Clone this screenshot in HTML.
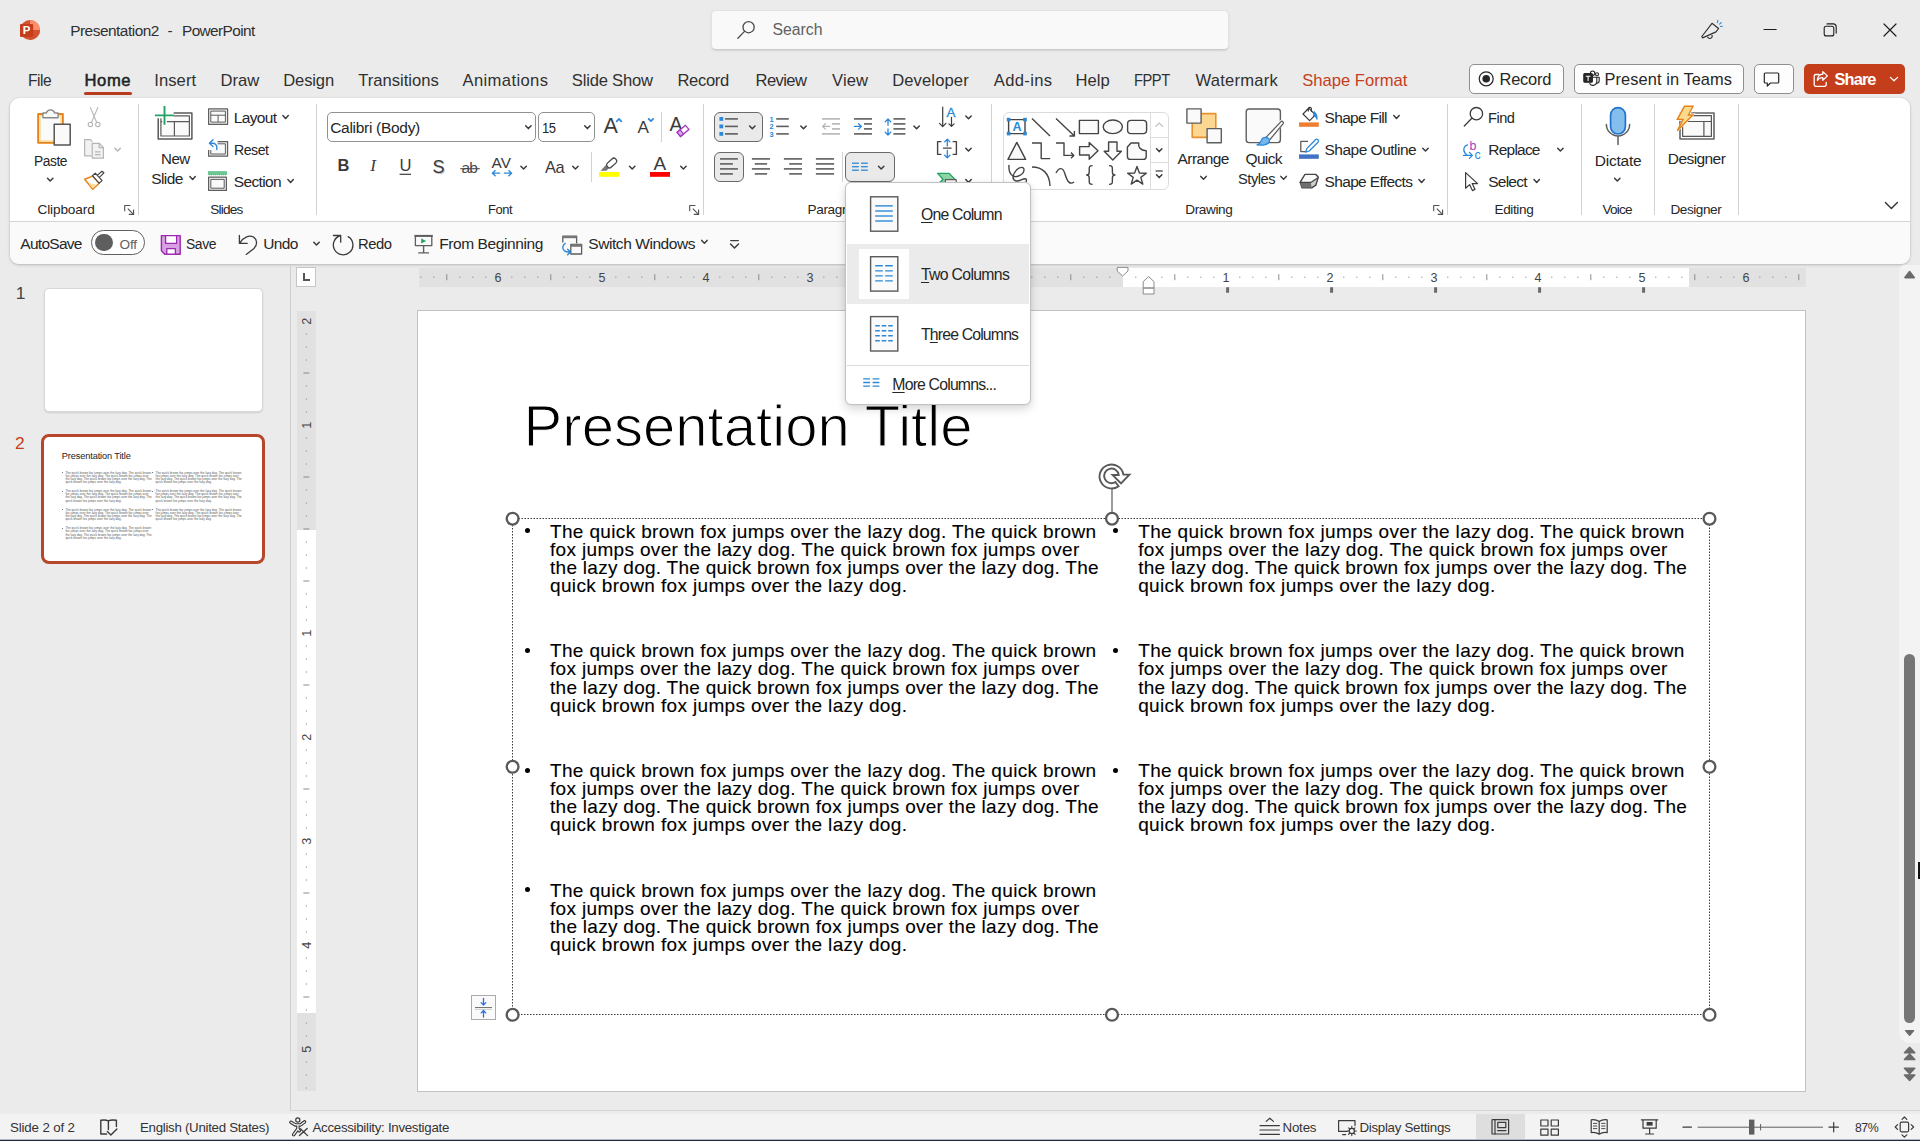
<!DOCTYPE html>
<html lang="en">
<head>
<meta charset="utf-8">
<title>Presentation2 - PowerPoint</title>
<style>
html,body{margin:0;padding:0}
body{width:1920px;height:1141px;position:relative;overflow:hidden;background:#ebebeb;font-family:"Liberation Sans",sans-serif;color:#262626}
.a{position:absolute;box-sizing:border-box}
.t{position:absolute;white-space:pre;line-height:1}
.t u{text-decoration:underline;text-underline-offset:1.5px;text-decoration-thickness:1px}
svg.l{position:absolute;left:0;top:0;overflow:visible}
.btn{position:absolute;box-sizing:border-box;border:1px solid #8f8f8f;border-radius:5px;background:#fdfdfd}
.sel{position:absolute;box-sizing:border-box;border:1px solid #6a6a6a;border-radius:6px;background:#eaeaea}
.sep{position:absolute;width:1px;background:#d2d2d2}
</style>
</head>
<body>
<!-- titlebar -->
<svg class="l" width="1920" height="100" viewBox="0 0 1920 100">
<circle cx="30" cy="30" r="10" fill="#d35230"/>
<path d="M30 20a10 10 0 0 1 10 10h-10z" fill="#ff8f6b"/>
<path d="M40 30a10 10 0 0 1-10 10V30z" fill="#d35230"/>
<path d="M30 20v10h10a10 10 0 0 1-10 10a10 10 0 0 1-9.2-6h9.7v-13.6z" fill="none"/>
<rect x="20" y="24" width="13.200" height="13" rx="1" fill="#c43e1c"/>
</svg>
<span class="t" style="left:22.80px;top:25.00px;font-size:11.4px;color:#fff;font-weight:700;">P</span>
<span class="t" style="left:70.20px;top:23.00px;font-size:15.4px;color:#303030;letter-spacing:-0.482px;">Presentation2</span>
<span class="t" style="left:167.60px;top:23.00px;font-size:15.4px;color:#303030;">-</span>
<span class="t" style="left:182.00px;top:23.00px;font-size:15.4px;color:#303030;letter-spacing:-0.613px;">PowerPoint</span>
<div class="a" style="left:711px;top:10px;width:518px;height:40px;background:#f9f9f9;border:1px solid #e2e2e2;border-bottom-color:#c9c9c9;border-radius:5px;box-shadow:0 1px 2px rgba(0,0,0,.10)"></div>
<svg class="l" width="1920" height="100" viewBox="0 0 1920 100" fill="none" stroke="#4a4a4a" stroke-width="1.3" stroke-linecap="round">
<circle cx="748.6" cy="27.2" r="5.6"/><path d="M744.5 31.4L737.9 38.2"/>
<!-- window controls -->
<path d="M1764 29.5h12.2" stroke="#1f1f1f" stroke-width="1.1"/>
<rect x="1824.2" y="26.3" width="9.6" height="9.6" rx="2" stroke="#1f1f1f" stroke-width="1.1"/>
<path d="M1827 23.9h6.2a3 3 0 0 1 3 3v6.2" stroke="#1f1f1f" stroke-width="1.1"/>
<path d="M1884 24l12 12M1896 24l-12 12" stroke="#1f1f1f" stroke-width="1.2"/>
<!-- coming soon megaphone -->
<path d="M1701.8 36.5l10.2-13.2l6.6 5.2l-2.6 3.4l-13.4 6z" stroke="#333" stroke-width="1.2" stroke-linejoin="round"/>
<path d="M1707.6 37.1a2.4 2.4 0 0 0 4.4-1.9" stroke="#333" stroke-width="1.1"/>
<path d="M1717.3 22.6l.6-2.2M1719.4 24.1l1.8-1.4M1720.3 26.5l2.1-.2" stroke="#2b88d8" stroke-width="1.1"/>
</svg>
<span class="t" style="left:772.40px;top:22.00px;font-size:15.8px;color:#616161;letter-spacing:0.028px;">Search</span>
<!-- tabs -->
<span class="t" style="left:27.50px;top:73.00px;font-size:16.6px;color:#303030;letter-spacing:-0.500px;transform:scaleX(0.9386);transform-origin:0 0;">File</span>
<span class="t" style="left:84.50px;top:73.00px;font-size:16.6px;color:#1f1f1f;letter-spacing:0.611px;-webkit-text-stroke:0.55px #1f1f1f;">Home</span>
<span class="t" style="left:154.20px;top:73.00px;font-size:16.6px;color:#303030;letter-spacing:0.097px;">Insert</span>
<span class="t" style="left:220.50px;top:73.00px;font-size:16.6px;color:#303030;letter-spacing:-0.011px;">Draw</span>
<span class="t" style="left:283.20px;top:73.00px;font-size:16.6px;color:#303030;letter-spacing:-0.131px;">Design</span>
<span class="t" style="left:358.20px;top:73.00px;font-size:16.6px;color:#303030;letter-spacing:0.005px;">Transitions</span>
<span class="t" style="left:462.50px;top:73.00px;font-size:16.6px;color:#303030;letter-spacing:0.378px;">Animations</span>
<span class="t" style="left:571.80px;top:73.00px;font-size:16.6px;color:#303030;letter-spacing:-0.203px;">Slide Show</span>
<span class="t" style="left:677.50px;top:73.00px;font-size:16.6px;color:#303030;letter-spacing:-0.360px;">Record</span>
<span class="t" style="left:755.50px;top:73.00px;font-size:16.6px;color:#303030;letter-spacing:-0.584px;">Review</span>
<span class="t" style="left:832.00px;top:73.00px;font-size:16.6px;color:#303030;letter-spacing:0.109px;">View</span>
<span class="t" style="left:892.20px;top:73.00px;font-size:16.6px;color:#303030;letter-spacing:0.107px;">Developer</span>
<span class="t" style="left:993.80px;top:73.00px;font-size:16.6px;color:#303030;letter-spacing:0.322px;">Add-ins</span>
<span class="t" style="left:1075.40px;top:73.00px;font-size:16.6px;color:#303030;letter-spacing:0.086px;">Help</span>
<span class="t" style="left:1134.30px;top:73.00px;font-size:16.6px;color:#303030;letter-spacing:-0.500px;transform:scaleX(0.8846);transform-origin:0 0;">FPPT</span>
<span class="t" style="left:1195.60px;top:73.00px;font-size:16.6px;color:#303030;letter-spacing:0.211px;">Watermark</span>
<span class="t" style="left:1302.30px;top:73.00px;font-size:16.6px;color:#c43e1c;letter-spacing:-0.014px;">Shape Format</span>
<div class="a" style="left:84px;top:92px;width:48px;height:3px;background:#b83b1d;border-radius:1.5px"></div>
<div class="btn" style="left:1469px;top:64px;width:95px;height:30px"></div>
<div class="btn" style="left:1574px;top:64px;width:170px;height:30px"></div>
<div class="btn" style="left:1754px;top:64px;width:40px;height:30px"></div>
<div class="a" style="left:1804px;top:64px;width:101px;height:30px;border-radius:5px;background:#c43e1c"></div>
<span class="t" style="left:1499.50px;top:71.00px;font-size:16.4px;letter-spacing:-0.209px;">Record</span>
<span class="t" style="left:1604.50px;top:71.00px;font-size:16.4px;letter-spacing:0.077px;">Present in Teams</span>
<span class="t" style="left:1834.50px;top:71.00px;font-size:16.4px;color:#ffffff;font-weight:700;letter-spacing:-0.891px;">Share</span>
<svg class="l" width="1920" height="100" viewBox="0 0 1920 100" fill="none" stroke-linecap="round" stroke-linejoin="round">
<circle cx="1486.2" cy="78.8" r="7" stroke="#262626" stroke-width="1.2"/><circle cx="1486.2" cy="78.8" r="3.8" fill="#262626"/>
<!-- teams -->
<g stroke="#262626" stroke-width="1.1">
<rect x="1583.8" y="73.6" width="8.6" height="8.6" rx="1" fill="#262626"/>
<circle cx="1592.6" cy="73.2" r="2.2"/><circle cx="1597" cy="74.2" r="1.5"/>
<path d="M1592.8 77.2h4v4.4a3.8 3.8 0 0 1-7 2"/>
<path d="M1597 77.2h2.2v3.6a2.4 2.4 0 0 1-2.2 2.4"/>
</g>
<path d="M1586.2 76.2h3.8M1588.1 76.2v4.2" stroke="#fff" stroke-width="1.1"/>
<!-- comment -->
<path d="M1765.2 73h12.6a.9.9 0 0 1 .9.9v8.2a.9.9 0 0 1-.9.9h-7.3l-3.2 3v-3h-2.1a.9.9 0 0 1-.9-.9v-8.2a.9.9 0 0 1 .9-.9z" stroke="#262626" stroke-width="1.2"/>
<!-- share icon -->
<path d="M1819 74.5h-3.2a1.6 1.6 0 0 0-1.6 1.6v8.6a1.6 1.6 0 0 0 1.6 1.6h8.8a1.6 1.6 0 0 0 1.6-1.6v-2.2" stroke="#fff" stroke-width="1.3"/>
<path d="M1822.8 71.6l4.6 4.3l-4.6 4.3v-2.6c-2.6 0-4.2.8-5.4 2.8c.2-3.6 2-6 5.4-6.3z" stroke="#fff" stroke-width="1.3"/>
<path d="M1890.4 77.4l3.6 3.4l3.6-3.4" stroke="#fff" stroke-width="1.3"/>
</svg>
<!-- ribbon_bg -->
<div class="a" style="left:10px;top:98px;width:1900px;height:166px;background:#fff;border-radius:9px;box-shadow:0 1px 3px rgba(0,0,0,.22),0 0 1px rgba(0,0,0,.12)"></div>
<div class="a" style="left:10px;top:221px;width:1900px;height:43px;background:#fafafa;border-top:1px solid #d4d4d4;border-radius:0 0 9px 9px"></div>
<div class="sep" style="left:138px;top:104px;height:111px"></div>
<div class="sep" style="left:316px;top:104px;height:111px"></div>
<div class="sep" style="left:703px;top:104px;height:111px"></div>
<div class="sep" style="left:1447px;top:104px;height:111px"></div>
<div class="sep" style="left:1581px;top:104px;height:111px"></div>
<div class="sep" style="left:1654px;top:104px;height:111px"></div>
<div class="sep" style="left:1738px;top:104px;height:111px"></div>
<div class="sep" style="left:991px;top:104px;height:79px"></div>
<div class="sep" style="left:661px;top:112px;height:30px"></div>
<div class="sep" style="left:591px;top:152px;height:30px"></div>
<div class="sep" style="left:842px;top:152px;height:30px"></div>
<div class="btn" style="left:327px;top:112px;width:209px;height:30px;background:#fff;border-color:#919191"></div>
<div class="btn" style="left:538px;top:112px;width:57px;height:30px;background:#fff;border-color:#919191"></div>
<div class="sel" style="left:714px;top:112px;width:49px;height:30px"></div>
<div class="sel" style="left:714px;top:152px;width:30px;height:30px"></div>
<div class="sel" style="left:845px;top:152px;width:50px;height:30px"></div>
<div class="a" style="left:91.3px;top:230.3px;width:53.6px;height:24.6px;background:#fff;border:1px solid #616161;border-radius:12.3px"></div>
<div class="a" style="left:95.4px;top:233.7px;width:17.6px;height:17.6px;background:#5e5e5e;border-radius:50%"></div>
<div class="a" style="left:1003px;top:112px;width:165.5px;height:78px;border:1px solid #dcdcdc;border-radius:6px;background:#fff"></div>
<div class="a" style="left:1150px;top:112px;width:1px;height:78px;background:#dcdcdc"></div>
<div class="a" style="left:1150px;top:137px;width:18px;height:1px;background:#dcdcdc"></div>
<div class="a" style="left:1150px;top:161.5px;width:18px;height:1px;background:#dcdcdc"></div>
<!-- ribbon_text -->
<span class="t" style="left:34.00px;top:153.00px;font-size:15.5px;letter-spacing:-0.500px;transform:scaleX(0.8900);transform-origin:0 0;">Paste</span>
<span class="t" style="left:37.50px;top:203.00px;font-size:13.6px;letter-spacing:-0.123px;">Clipboard</span>
<span class="t" style="left:160.50px;top:151.00px;font-size:15.5px;letter-spacing:-0.500px;transform:scaleX(0.9728);transform-origin:0 0;">New</span>
<span class="t" style="left:151.30px;top:171.00px;font-size:15.5px;letter-spacing:-0.617px;">Slide</span>
<span class="t" style="left:233.70px;top:110.00px;font-size:15.5px;letter-spacing:-0.649px;">Layout</span>
<span class="t" style="left:233.70px;top:142.00px;font-size:15.5px;letter-spacing:-0.500px;transform:scaleX(0.9091);transform-origin:0 0;">Reset</span>
<span class="t" style="left:233.70px;top:174.00px;font-size:15.5px;letter-spacing:-0.617px;">Section</span>
<span class="t" style="left:210.30px;top:203.00px;font-size:13.6px;letter-spacing:-0.806px;">Slides</span>
<span class="t" style="left:330.20px;top:120.00px;font-size:15.5px;letter-spacing:-0.292px;">Calibri (Body)</span>
<span class="t" style="left:542.20px;top:120.00px;font-size:15.5px;letter-spacing:-0.500px;transform:scaleX(0.8418);transform-origin:0 0;">15</span>
<span class="t" style="left:487.50px;top:203.00px;font-size:13.6px;letter-spacing:-0.500px;transform:scaleX(0.9532);transform-origin:0 0;">Font</span>
<span class="t" style="left:807.50px;top:203.00px;font-size:13.6px;letter-spacing:-0.373px;">Paragraph</span>
<span class="t" style="left:1177.50px;top:151.00px;font-size:15.5px;letter-spacing:-0.526px;">Arrange</span>
<span class="t" style="left:1245.50px;top:151.00px;font-size:15.5px;letter-spacing:-0.656px;">Quick</span>
<span class="t" style="left:1237.50px;top:171.00px;font-size:15.5px;letter-spacing:-0.500px;transform:scaleX(0.9441);transform-origin:0 0;">Styles</span>
<span class="t" style="left:1324.50px;top:110.00px;font-size:15.5px;letter-spacing:-0.660px;">Shape Fill</span>
<span class="t" style="left:1324.50px;top:142.00px;font-size:15.5px;letter-spacing:-0.504px;">Shape Outline</span>
<span class="t" style="left:1324.50px;top:174.00px;font-size:15.5px;letter-spacing:-0.645px;">Shape Effects</span>
<span class="t" style="left:1185.30px;top:203.00px;font-size:13.6px;letter-spacing:-0.396px;">Drawing</span>
<span class="t" style="left:1488.30px;top:110.00px;font-size:15.5px;letter-spacing:-0.500px;transform:scaleX(0.9422);transform-origin:0 0;">Find</span>
<span class="t" style="left:1488.30px;top:142.00px;font-size:15.5px;letter-spacing:-0.779px;">Replace</span>
<span class="t" style="left:1488.30px;top:174.00px;font-size:15.5px;letter-spacing:-0.779px;">Select</span>
<span class="t" style="left:1494.50px;top:203.00px;font-size:13.6px;letter-spacing:-0.396px;">Editing</span>
<span class="t" style="left:1594.70px;top:153.00px;font-size:15.5px;letter-spacing:-0.208px;">Dictate</span>
<span class="t" style="left:1602.50px;top:203.00px;font-size:13.6px;letter-spacing:-0.816px;">Voice</span>
<span class="t" style="left:1667.80px;top:151.00px;font-size:15.5px;letter-spacing:-0.576px;">Designer</span>
<span class="t" style="left:1670.50px;top:203.00px;font-size:13.6px;letter-spacing:-0.458px;">Designer</span>
<span class="t" style="left:20.30px;top:236.00px;font-size:15.5px;letter-spacing:-0.717px;">AutoSave</span>
<span class="t" style="left:186.30px;top:236.00px;font-size:15.5px;letter-spacing:-0.500px;transform:scaleX(0.8982);transform-origin:0 0;">Save</span>
<span class="t" style="left:263.30px;top:236.00px;font-size:15.5px;letter-spacing:-0.688px;">Undo</span>
<span class="t" style="left:358.30px;top:236.00px;font-size:15.5px;letter-spacing:-0.500px;transform:scaleX(0.9533);transform-origin:0 0;">Redo</span>
<span class="t" style="left:439.20px;top:236.00px;font-size:15.5px;letter-spacing:-0.409px;">From Beginning</span>
<span class="t" style="left:588.30px;top:236.00px;font-size:15.5px;letter-spacing:-0.434px;">Switch Windows</span>
<span class="t" style="left:119.50px;top:238.00px;font-size:13.6px;color:#616161;letter-spacing:-0.195px;">Off</span>
<span class="t" style="left:337.50px;top:157.00px;font-size:16.5px;color:#3b3b3b;font-weight:700;">B</span>
<span class="t" style="left:370.20px;top:157.00px;font-size:17px;color:#3b3b3b;font-family:'Liberation Serif',serif;font-style:italic;">I</span>
<span class="t" style="left:399.40px;top:158.00px;font-size:16.6px;color:#3b3b3b;">U</span>
<span class="t" style="left:432.40px;top:158.00px;font-size:18px;color:#3b3b3b;text-shadow:1.2px 1.2px 0.6px #bdbdbd;">S</span>
<span class="t" style="left:461.50px;top:160.00px;font-size:15.5px;color:#4a4a4a;letter-spacing:-0.750px;">ab</span>
<span class="t" style="left:491.60px;top:155.00px;font-size:15.4px;color:#3b3b3b;">AV</span>
<span class="t" style="left:544.90px;top:159.00px;font-size:17px;color:#3b3b3b;letter-spacing:-0.500px;transform:scaleX(0.9657);transform-origin:0 0;">Aa</span>
<span class="t" style="left:603.40px;top:116.00px;font-size:21.5px;color:#3b3b3b;">A</span>
<span class="t" style="left:637.60px;top:119.00px;font-size:17.2px;color:#3b3b3b;">A</span>
<span class="t" style="left:669.60px;top:115.00px;font-size:19.5px;color:#3b3b3b;">A</span>
<span class="t" style="left:653.40px;top:154.00px;font-size:19px;color:#3b3b3b;">A</span>
<!-- ribbon_icons -->
<svg class="l" width="1920" height="300" viewBox="0 0 1920 300" fill="none" stroke-linejoin="round">
<rect x="38.2" y="114" width="24.6" height="28.8" fill="#fafafa" stroke="#e8811a" stroke-width="2"/>
<rect x="40" y="115.8" width="21" height="25.2" fill="none" stroke="#fbdc9a" stroke-width="1.4"/>
<path d="M42.900 117.800v-4.800h3.400a4.400 4.400 0 0 1 8.400 0h3.400v4.800z" fill="#fafafa" stroke="#8a8a8a" stroke-width="1.400"/>
<rect x="54.200" y="124.200" width="16" height="20.800" fill="#fafafa" stroke="#555" stroke-width="1.500"/>
<path d="M47.50 178.20L50.20 181.00L52.90 178.20" fill="none" stroke="#3b3b3b" stroke-width="1.5" stroke-linecap="round" stroke-linejoin="round"/>
<g stroke="#b5b5b5" stroke-width="1.100" stroke-linecap="round"><path d="M90.400 107.600L96.600 122.200M97.800 107.600L91.600 122.200"/><circle cx="90.400" cy="124.400" r="2.200"/><circle cx="97.800" cy="124.400" r="2.200"/></g>
<g stroke="#b5b5b5" stroke-width="1.200"><path d="M91.400 155.800h-6.800v-16.200h5.800l2 2" fill="#f2f2f2"/><path d="M92.200 143.400h7.200l4 4v10.800h-11.200z" fill="#f2f2f2"/><path d="M99.200 143.600v4h4"/><path d="M95 151.800h5.600M95 154.600h5.600"/></g>
<path d="M114.90 148.20L117.60 151.00L120.30 148.20" fill="none" stroke="#b5b5b5" stroke-width="1.5" stroke-linecap="round" stroke-linejoin="round"/>
<path d="M84.700 179.300l7.800-3.200l6.700 7.200l-6.500 6z" fill="#fff" stroke="#e8811a" stroke-width="1.500"/>
<path d="M88.600 183l8 1.800l-4 3.800z" fill="#fbdc9a"/>
<path d="M97.200 175.400l4.800-4.200l1.900 1.600l-4.500 4.500" fill="#fff" stroke="#444" stroke-width="1.200"/>
<path d="M92.400 175.600l2.900-2.400l6.800 7.400l-2.900 2.500z" fill="#fff" stroke="#444" stroke-width="1.200"/>
<g transform="translate(124.2,205)" fill="none" stroke="#505050" stroke-width="1.1"><path d="M0.5 6.2V0.5H6.2"/><path d="M3.6 3.6L9.3 9.3"/><path d="M9.4 4.6V9.4H4.6"/></g>
<rect x="158.200" y="113.100" width="33.700" height="25.900" fill="#fff" stroke="#5a5a5a" stroke-width="1.500"/>
<rect x="160.900" y="115.900" width="28.500" height="20.100" fill="#fafafa" stroke="#5a5a5a" stroke-width="1.200"/>
<path d="M160.900 121.600H189.400M174.400 121.600V136" stroke="#5a5a5a" stroke-width="1.200"/>
<rect x="154" y="105" width="19.700" height="13.300" fill="#fff"/><rect x="162.300" y="118" width="4.500" height="8.200" fill="#fff"/>
<path d="M155 115.400H173.900M164.500 106V124.700" stroke="#21a366" stroke-width="1.900"/>
<path d="M189.90 176.60L192.60 179.40L195.30 176.60" fill="none" stroke="#3b3b3b" stroke-width="1.5" stroke-linecap="round" stroke-linejoin="round"/>
<rect x="208.6" y="108.9" width="19" height="15.4" fill="#ececec" stroke="#5e5e5e" stroke-width="1.2"/>
<rect x="210.8" y="111.1" width="14.6" height="11" fill="#fafafa" stroke="#5e5e5e" stroke-width="1"/>
<path d="M210.8 115.2H225.4M218.1 115.2V122.1" stroke="#5e5e5e" stroke-width="1"/>
<path d="M282.90 115.60L285.60 118.40L288.30 115.60" fill="none" stroke="#3b3b3b" stroke-width="1.5" stroke-linecap="round" stroke-linejoin="round"/>
<rect x="208.6" y="141.6" width="19" height="14.6" fill="#ececec" stroke="#5e5e5e" stroke-width="1.2"/>
<rect x="210.8" y="143.8" width="14.6" height="10.2" fill="#fafafa" stroke="#5e5e5e" stroke-width="1"/>
<rect x="207" y="138.4" width="10.6" height="11.6" fill="#fff" stroke="none"/>
<path d="M213 139.8l-3.6 3.4l3.6 3.2M209.6 143.2h3.2a4 4 0 0 1 4 4.2v2.2" stroke="#2b88d8" stroke-width="1.4" stroke-linecap="round"/>
<rect x="208.4" y="171.6" width="18.2" height="3.2" fill="#6fc993" stroke="#21a366" stroke-width="0.8" stroke-dasharray="1.2 0.8"/>
<rect x="208.6" y="177.2" width="17.8" height="13.2" fill="#ececec" stroke="#5e5e5e" stroke-width="1.2"/>
<rect x="210.8" y="179.4" width="13.4" height="8.8" fill="#fafafa" stroke="#5e5e5e" stroke-width="1"/>
<path d="M287.90 179.60L290.60 182.40L293.30 179.60" fill="none" stroke="#3b3b3b" stroke-width="1.5" stroke-linecap="round" stroke-linejoin="round"/>
<path d="M525.70 125.80L528.40 128.60L531.10 125.80" fill="none" stroke="#3b3b3b" stroke-width="1.5" stroke-linecap="round" stroke-linejoin="round"/>
<path d="M584.70 125.80L587.40 128.60L590.10 125.80" fill="none" stroke="#3b3b3b" stroke-width="1.5" stroke-linecap="round" stroke-linejoin="round"/>
<path d="M616.700 121.300l2.300-2.400l2.300 2.400" stroke="#2b88d8" stroke-width="1.700" stroke-linecap="round"/>
<path d="M648.600 118.800l2.300 2.400l2.300-2.400" stroke="#2b88d8" stroke-width="1.700" stroke-linecap="round"/>
<g transform="translate(683 130.900) rotate(-40)"><rect x="-5.500" y="-2.700" width="11" height="5.400" fill="#fff" stroke="#a33bc2" stroke-width="1.300"/><rect x="-5.500" y="-2.700" width="4" height="5.400" fill="#dca6e8" stroke="#a33bc2" stroke-width="1.300"/></g>
<path d="M399.6 174.3H411" stroke="#3b3b3b" stroke-width="1.2"/>
<path d="M460.200 168.700H479.800" stroke="#4a4a4a" stroke-width="1.100"/>
<path d="M492.400 173.200H499.600M504.400 173.200H511.600M495.200 170.600l-2.800 2.600l2.800 2.600M508.800 170.600l2.800 2.600l-2.800 2.600" stroke="#2b88d8" stroke-width="1.3" stroke-linecap="round"/>
<path d="M520.90 166.20L523.60 169.00L526.30 166.20" fill="none" stroke="#3b3b3b" stroke-width="1.5" stroke-linecap="round" stroke-linejoin="round"/>
<path d="M572.70 166.20L575.40 169.00L578.10 166.20" fill="none" stroke="#3b3b3b" stroke-width="1.5" stroke-linecap="round" stroke-linejoin="round"/>
<path d="M629.50 166.20L632.20 169.00L634.90 166.20" fill="none" stroke="#3b3b3b" stroke-width="1.5" stroke-linecap="round" stroke-linejoin="round"/>
<path d="M680.70 166.20L683.40 169.00L686.10 166.20" fill="none" stroke="#3b3b3b" stroke-width="1.5" stroke-linecap="round" stroke-linejoin="round"/>
<rect x="599" y="172" width="20" height="4.8" fill="#ffff00"/>
<path d="M605.600 165.200l3.300 3.200l-2.700 2.400h-5.600z" fill="#767676"/>
<g transform="translate(611.700 163) rotate(-42)"><rect x="-5.600" y="-2.800" width="11.200" height="5.600" rx="2.300" fill="#fff" stroke="#444" stroke-width="1.300"/></g>
<rect x="650" y="172" width="20" height="4.8" fill="#ff0000"/>
<g transform="translate(689.2,205)" fill="none" stroke="#505050" stroke-width="1.1"><path d="M0.5 6.2V0.5H6.2"/><path d="M3.6 3.6L9.3 9.3"/><path d="M9.4 4.6V9.4H4.6"/></g>
<rect x="719.4" y="117.0" width="3.8" height="3.8" fill="#2b88d8"/>
<rect x="719.4" y="124.5" width="3.8" height="3.8" fill="#2b88d8"/>
<rect x="719.4" y="132.0" width="3.8" height="3.8" fill="#2b88d8"/>
<path d="M725 118.9H737.9" stroke="#5e5e5e" stroke-width="1.6"/><path d="M725 126.4H737.9" stroke="#5e5e5e" stroke-width="1.6"/><path d="M725 133.9H737.9" stroke="#5e5e5e" stroke-width="1.6"/>
<path d="M749.60 126.00L752.30 128.80L755.00 126.00" fill="none" stroke="#3b3b3b" stroke-width="1.5" stroke-linecap="round" stroke-linejoin="round"/>
<path d="M776.2 118.9H788.8" stroke="#5e5e5e" stroke-width="1.6"/><path d="M776.2 126.4H788.8" stroke="#5e5e5e" stroke-width="1.6"/><path d="M776.2 133.9H788.8" stroke="#5e5e5e" stroke-width="1.6"/>
<text x="769.6" y="121.5" font-family="Liberation Sans, sans-serif" font-size="7.4" font-weight="700" fill="#2b88d8">1</text>
<text x="769.6" y="129.0" font-family="Liberation Sans, sans-serif" font-size="7.4" font-weight="700" fill="#2b88d8">2</text>
<text x="769.6" y="136.5" font-family="Liberation Sans, sans-serif" font-size="7.4" font-weight="700" fill="#2b88d8">3</text>
<path d="M800.80 126.00L803.50 128.80L806.20 126.00" fill="none" stroke="#3b3b3b" stroke-width="1.5" stroke-linecap="round" stroke-linejoin="round"/>
<path d="M822 118.9H840" stroke="#b5b5b5" stroke-width="1.6"/><path d="M822 133.9H840" stroke="#b5b5b5" stroke-width="1.6"/>
<path d="M832 123.9H840" stroke="#b5b5b5" stroke-width="1.6"/><path d="M832 128.9H840" stroke="#b5b5b5" stroke-width="1.6"/>
<path d="M822.600 126.400H829.400M825.400 123.700l-2.800 2.700l2.800 2.700" stroke="#b5b5b5" stroke-width="1.3" stroke-linecap="round"/>
<path d="M854 118.9H872" stroke="#5e5e5e" stroke-width="1.6"/><path d="M854 133.9H872" stroke="#5e5e5e" stroke-width="1.6"/>
<path d="M864 123.9H872" stroke="#5e5e5e" stroke-width="1.6"/><path d="M864 128.9H872" stroke="#5e5e5e" stroke-width="1.6"/>
<path d="M854.400 126.400H861.400M858.600 123.700l2.800 2.700l-2.800 2.700" stroke="#2b88d8" stroke-width="1.3" stroke-linecap="round"/>
<path d="M893.4 118.9H905.4" stroke="#5e5e5e" stroke-width="1.6"/><path d="M893.4 123.9H905.4" stroke="#5e5e5e" stroke-width="1.6"/><path d="M893.4 128.9H905.4" stroke="#5e5e5e" stroke-width="1.6"/><path d="M893.4 133.9H905.4" stroke="#5e5e5e" stroke-width="1.6"/>
<path d="M888 119V125.200M885.100 121.900l2.900-2.900l2.900 2.900M888 128.800V135M885.100 132.100l2.900 2.900l2.900-2.900" stroke="#2b88d8" stroke-width="1.3" stroke-linecap="round"/>
<path d="M913.90 126.00L916.60 128.80L919.30 126.00" fill="none" stroke="#3b3b3b" stroke-width="1.5" stroke-linecap="round" stroke-linejoin="round"/>
<path d="M942.700 107.200V126.400M939.500 123.400l3.200 3.200l3.200-3.200" stroke="#3b3b3b" stroke-width="1.2" stroke-linecap="round"/>
<path d="M951.500 117.400V126.400M948.900 123.800l2.600 2.600l2.600-2.600" stroke="#3b3b3b" stroke-width="1.2" stroke-linecap="round"/>
<text x="946.600" y="116.600" font-family="Liberation Sans, sans-serif" font-size="13.400" fill="#2b88d8" stroke="#2b88d8" stroke-width="0.300">A</text>
<path d="M965.80 116.00L968.50 118.80L971.20 116.00" fill="none" stroke="#3b3b3b" stroke-width="1.5" stroke-linecap="round" stroke-linejoin="round"/>
<path d="M941.400 141.600h-3.800v12.800h3.800M952.600 141.600h3.800v12.800h-3.800M943 148.100h8.600" stroke="#444" stroke-width="1.400"/>
<path d="M947.300 146V139.400M944.700 141.900l2.600-2.600l2.600 2.600M947.300 150.400V157.800M944.700 155.300l2.600 2.600l2.600-2.600" stroke="#2b88d8" stroke-width="1.3" stroke-linecap="round"/>
<path d="M965.80 148.20L968.50 151.00L971.20 148.20" fill="none" stroke="#3b3b3b" stroke-width="1.5" stroke-linecap="round" stroke-linejoin="round"/>
<path d="M937.6 173.4h11.6l5.6 5.8l-5.6 5.8h-11.6l5.4-5.8z" fill="#8ed3a4" stroke="#21a366" stroke-width="1.3"/>
<rect x="945.4" y="179.6" width="10.8" height="8" fill="#fafafa" stroke="#5e5e5e" stroke-width="1.2"/>
<path d="M965.80 179.60L968.50 182.40L971.20 179.60" fill="none" stroke="#3b3b3b" stroke-width="1.5" stroke-linecap="round" stroke-linejoin="round"/>
<path d="M720 158.9H737.9" stroke="#5e5e5e" stroke-width="1.6"/><path d="M720 168.9H737.9" stroke="#5e5e5e" stroke-width="1.6"/><path d="M720 163.9H732.9" stroke="#5e5e5e" stroke-width="1.6"/><path d="M720 173.9H732.9" stroke="#5e5e5e" stroke-width="1.6"/>
<path d="M751.9 158.9H770" stroke="#5e5e5e" stroke-width="1.6"/><path d="M751.9 168.9H770" stroke="#5e5e5e" stroke-width="1.6"/><path d="M754.8 163.9H767.1" stroke="#5e5e5e" stroke-width="1.6"/><path d="M754.8 173.9H767.1" stroke="#5e5e5e" stroke-width="1.6"/>
<path d="M783.9 158.9H802" stroke="#5e5e5e" stroke-width="1.6"/><path d="M783.9 168.9H802" stroke="#5e5e5e" stroke-width="1.6"/><path d="M789.2 163.9H802" stroke="#5e5e5e" stroke-width="1.6"/><path d="M789.2 173.9H802" stroke="#5e5e5e" stroke-width="1.6"/>
<path d="M815.9 158.9H834.1" stroke="#5e5e5e" stroke-width="1.6"/><path d="M815.9 168.9H834.1" stroke="#5e5e5e" stroke-width="1.6"/><path d="M815.9 163.9H834.1" stroke="#5e5e5e" stroke-width="1.6"/><path d="M815.9 173.9H834.1" stroke="#5e5e5e" stroke-width="1.6"/>
<path d="M852 163.2H858.8" stroke="#2b88d8" stroke-width="1.3"/><path d="M852 166.7H858.8" stroke="#2b88d8" stroke-width="1.3"/><path d="M852 170.2H858.8" stroke="#2b88d8" stroke-width="1.3"/>
<path d="M861 163.2H867.8" stroke="#2b88d8" stroke-width="1.3"/><path d="M861 166.7H867.8" stroke="#2b88d8" stroke-width="1.3"/><path d="M861 170.2H867.8" stroke="#2b88d8" stroke-width="1.3"/>
<path d="M878.50 166.20L881.20 169.00L883.90 166.20" fill="none" stroke="#3b3b3b" stroke-width="1.5" stroke-linecap="round" stroke-linejoin="round"/>
<rect x="1008.6" y="119.6" width="16.4" height="14" stroke="#444" stroke-width="1.4"/>
<rect x="1006.8" y="117.8" width="3.600" height="3.600" fill="#2b88d8"/>
<rect x="1023.2" y="117.8" width="3.600" height="3.600" fill="#2b88d8"/>
<rect x="1006.8" y="131.8" width="3.600" height="3.600" fill="#2b88d8"/>
<rect x="1023.2" y="131.8" width="3.600" height="3.600" fill="#2b88d8"/>
<text x="1012.500" y="131" font-family="Liberation Sans, sans-serif" font-size="12.600" font-weight="700" fill="#2b88d8">A</text>
<path d="M1032 118.6L1050 136" stroke="#444" stroke-width="1.4"/>
<path d="M1056 118.6L1074.4 136M1074.4 131v5h-5" stroke="#444" stroke-width="1.4"/>
<rect x="1079.4" y="120.4" width="19" height="13.2" fill="#fafafa" stroke="#444" stroke-width="1.4"/>
<ellipse cx="1112.8" cy="126.8" rx="9.6" ry="6.8" fill="#fafafa" stroke="#444" stroke-width="1.4"/>
<rect x="1127.6" y="120.4" width="19" height="13.2" rx="3.4" fill="#fafafa" stroke="#444" stroke-width="1.4"/>
<path d="M1016.8 142.4l8.8 17h-17.6z" fill="#fafafa" stroke="#444" stroke-width="1.4"/>
<path d="M1032 143h9.2v15.6h9" stroke="#444" stroke-width="1.4"/>
<path d="M1056 143h8v12.4h9.6M1071 152.6l2.8 2.8l-2.8 2.8" stroke="#444" stroke-width="1.4"/>
<path d="M1079.6 146.6h9.6v-4.2l8.8 8.4l-8.8 8.4v-4.2h-9.6z" fill="#fafafa" stroke="#444" stroke-width="1.4"/>
<path d="M1108.6 142h8.4v9.2h4.4l-8.6 8.8l-8.6-8.8h4.4z" fill="#fafafa" stroke="#444" stroke-width="1.4"/>
<path d="M1127.400 147L1131 143H1138.800C1138 147 1140.200 150.600 1146.200 150.800V156.400a3 3 0 0 1-3 3H1130.400a3 3 0 0 1-3-3z" fill="#fafafa" stroke="#444" stroke-width="1.4"/>
<path d="M1009 165.400C1008.600 170 1009.600 174 1013 176C1017 178 1023.600 174.600 1024 170C1024.200 166.600 1019.600 166.400 1016.200 170.400C1012.600 174.600 1011.600 179.400 1015.600 180.800C1019 182 1022.400 178.400 1025.400 178.800C1026.600 179 1026.600 180.400 1026.200 181.400" stroke="#444" stroke-width="1.4" stroke-linecap="round"/>
<path d="M1032 167c10 0 17.6 6 18 19" stroke="#444" stroke-width="1.4"/>
<path d="M1056 173c3-6 7-6 9 1c2.4 8 5 11 9 8" stroke="#444" stroke-width="1.4"/>
<path d="M1092.6 165.6c-3.4 0-3.4 1.4-3.4 4v2.6c0 2-.8 2.8-2.6 2.8c1.8 0 2.6.8 2.6 2.8v2.6c0 2.6 0 4 3.4 4" stroke="#444" stroke-width="1.4"/>
<path d="M1109 165.6c3.4 0 3.4 1.4 3.4 4v2.6c0 2 .8 2.8 2.6 2.8c-1.8 0-2.6.8-2.6 2.8v2.6c0 2.6 0 4-3.4 4" stroke="#444" stroke-width="1.4"/>
<polygon points="1137.0,166.4 1139.4,173.0 1146.3,173.2 1140.8,177.4 1142.8,184.1 1137.0,180.2 1131.2,184.1 1133.2,177.4 1127.7,173.2 1134.6,173.0" fill="#fafafa" stroke="#444" stroke-width="1.4"/>
<path d="M1155.8 126.4l3.4-3.4l3.4 3.4" stroke="#c4c4c4" stroke-width="1.3" stroke-linecap="round"/>
<path d="M1156.50 148.80L1159.20 151.60L1161.90 148.80" fill="none" stroke="#3b3b3b" stroke-width="1.5" stroke-linecap="round" stroke-linejoin="round"/>
<path d="M1155.6 171H1162.8" stroke="#3b3b3b" stroke-width="1.2"/>
<path d="M1156.50 174.80L1159.20 177.60L1161.90 174.80" fill="none" stroke="#3b3b3b" stroke-width="1.5" stroke-linecap="round" stroke-linejoin="round"/>
<rect x="1192.2" y="113.6" width="23.6" height="23.8" fill="#fbd792" stroke="#e8912d" stroke-width="1.6"/>
<rect x="1186.9" y="108.9" width="14.2" height="14.2" fill="#fafafa" stroke="#5e5e5e" stroke-width="1.4"/>
<rect x="1207.1" y="128.6" width="14.2" height="14.2" fill="#fafafa" stroke="#5e5e5e" stroke-width="1.4"/>
<path d="M1200.80 176.40L1203.50 179.20L1206.20 176.40" fill="none" stroke="#3b3b3b" stroke-width="1.5" stroke-linecap="round" stroke-linejoin="round"/>
<rect x="1246.2" y="109" width="34.2" height="33.6" rx="2.8" fill="#fafafa" stroke="#5e5e5e" stroke-width="1.4"/>
<path d="M1282 122.4L1266.4 139.2" stroke="#fff" stroke-width="5.6" stroke-linecap="round"/>
<path d="M1281.2 121.4a1.6 1.6 0 0 1 2 2.2l-13.8 16.6l-3.4-2.8z" fill="#fff" stroke="#5e5e5e" stroke-width="1.3"/>
<path d="M1266 137.4c2.4.4 3.6 1.8 3.6 3.8c-1 3.2-6.4 4.6-12.600 3.600c2.8-1 3.600-2.400 4.400-4.600c.8-2 2.600-3 4.600-2.800z" fill="#74b7ec" stroke="#2b88d8" stroke-width="1.2"/>
<path d="M1280.90 176.40L1283.60 179.20L1286.30 176.40" fill="none" stroke="#3b3b3b" stroke-width="1.5" stroke-linecap="round" stroke-linejoin="round"/>
<rect x="1299" y="122.4" width="19.8" height="4.4" fill="#ed7d31"/>
<path d="M1308.8 108.2l6.600 6.600l-5.800 5.800l-6.600-6.600z" fill="#fff" stroke="#3b3b3b" stroke-width="1.2"/><path d="M1306.400 110.600l3.400-3.200" stroke="#3b3b3b" stroke-width="1.2" stroke-linecap="round"/>
<path d="M1314 111.400c2.600 1.800 3.600 4.600 3 8.200c-.6-2-1.600-3.200-3.400-3.600z" fill="#2b88d8" stroke="#2b88d8" stroke-width="0.800"/>
<path d="M1308.400 111.400V108.800a1.500 1.500 0 0 1 3 0V112" stroke="#3b3b3b" stroke-width="1.100"/>
<path d="M1393.80 115.60L1396.50 118.40L1399.20 115.60" fill="none" stroke="#3b3b3b" stroke-width="1.5" stroke-linecap="round" stroke-linejoin="round"/>
<rect x="1299" y="154.400" width="19.8" height="4.4" fill="#4472c4"/>
<path d="M1308 141.400h-7.200v10.200h5" stroke="#5e5e5e" stroke-width="1.300"/>
<path d="M1315.400 139.800a1.700 1.700 0 0 1 2.600 2.400l-8.800 8.800l-3.600 1.200l1.200-3.600z" fill="#fff" stroke="#2b88d8" stroke-width="1.300"/>
<path d="M1422.80 148.20L1425.50 151.00L1428.20 148.20" fill="none" stroke="#3b3b3b" stroke-width="1.5" stroke-linecap="round" stroke-linejoin="round"/>
<path d="M1300.200 182.400L1305 174.500H1315.800L1318.300 177.400L1315.800 185.200L1311.700 187.800H1302Z" fill="#cfcfcf" stroke="#444" stroke-width="1.400"/>
<path d="M1300.200 182.400H1310.800L1311.700 187.800H1302Z" fill="#6e6e6e"/>
<path d="M1300.200 182.400L1305 174.500H1315.800L1318.300 177.400L1310.800 182.400Z" fill="#fafafa" stroke="#444" stroke-width="1.200"/>
<path d="M1418.90 179.60L1421.60 182.40L1424.30 179.60" fill="none" stroke="#3b3b3b" stroke-width="1.5" stroke-linecap="round" stroke-linejoin="round"/>
<g transform="translate(1433.2,205)" fill="none" stroke="#505050" stroke-width="1.1"><path d="M0.5 6.2V0.5H6.2"/><path d="M3.6 3.6L9.3 9.3"/><path d="M9.4 4.6V9.4H4.6"/></g>
<circle cx="1476.4" cy="113.700" r="6.200" stroke="#3b3b3b" stroke-width="1.300"/><path d="M1471.800 118.300L1464.300 126" stroke="#3b3b3b" stroke-width="1.300" stroke-linecap="round"/>
<text x="1469.400" y="150" font-family="Liberation Sans, sans-serif" font-size="12.400" fill="#a33bc2">b</text>
<text x="1474.600" y="159" font-family="Liberation Sans, sans-serif" font-size="12.400" fill="#2b88d8">c</text>
<path d="M1467.600 144.800c-3.800 1-5 5-2.600 8.200l2.200 2.400M1463.600 155.400h8.600M1469.400 152.400l3 3l-3 3" stroke="#2b88d8" stroke-width="1.300" stroke-linecap="round"/>
<path d="M1557.70 148.20L1560.40 151.00L1563.10 148.20" fill="none" stroke="#3b3b3b" stroke-width="1.5" stroke-linecap="round" stroke-linejoin="round"/>
<path d="M1465.600 172.600v15.600l4-3.600l2.800 6l2.600-1.200l-2.800-5.800h5.400z" fill="#fff" stroke="#3b3b3b" stroke-width="1.200"/>
<path d="M1534.00 179.60L1536.70 182.40L1539.40 179.60" fill="none" stroke="#3b3b3b" stroke-width="1.5" stroke-linecap="round" stroke-linejoin="round"/>
<rect x="1610.600" y="107.600" width="14.800" height="26.400" rx="7.400" fill="#83beec" stroke="#1f74d1" stroke-width="1.700"/>
<path d="M1606.400 124.400a11.600 11.600 0 0 0 23.200 0M1618 136v8.600" stroke="#5e5e5e" stroke-width="1.500" stroke-linecap="round"/>
<path d="M1614.60 178.20L1617.30 181.00L1620.00 178.20" fill="none" stroke="#3b3b3b" stroke-width="1.5" stroke-linecap="round" stroke-linejoin="round"/>
<rect x="1680" y="113" width="34" height="26" fill="#fff" stroke="#666" stroke-width="1.600"/>
<rect x="1682.600" y="115.700" width="28.800" height="20.600" fill="#fafafa" stroke="#555" stroke-width="1.200"/>
<path d="M1682.600 121.500H1711.400M1703.900 121.500V136.300" stroke="#555" stroke-width="1.200"/>
<path d="M1683.400 104.800h12l-4.600 8.800h4.800l-19.400 20l5-12.800h-6z" fill="#fff"/>
<path d="M1684.400 106.300H1693L1688.400 115H1692.800L1677.300 130.800L1683.100 119.400H1677.300Z" fill="#fbdc8f" stroke="#e8811a" stroke-width="1.400" stroke-linejoin="miter"/>
<path d="M1885.40 202.40L1891.40 208.40L1897.40 202.40" fill="none" stroke="#333" stroke-width="1.4" stroke-linecap="round" stroke-linejoin="round"/>
<path d="M161.400 235.600h18.800v18.600h-15.400l-3.400-3.400z" fill="#d8a1e2" stroke="#9c27b0" stroke-width="1.400"/>
<rect x="165.600" y="235.600" width="11" height="7.800" fill="#fff" stroke="#9c27b0" stroke-width="1.300"/><rect x="166.800" y="248.600" width="8.600" height="5.600" fill="#fff" stroke="#9c27b0" stroke-width="1.300"/>
<path d="M239.400 235.400V243.300H247.300M240.400 242.400C243.600 237 249.400 234.600 253.400 237C257.400 239.600 257.600 245 254 248.400L246.200 254.400" stroke="#3b3b3b" stroke-width="1.300" stroke-linecap="round"/>
<path d="M313.80 242.20L316.50 245.00L319.20 242.20" fill="none" stroke="#3b3b3b" stroke-width="1.5" stroke-linecap="round" stroke-linejoin="round"/>
<path d="M348.200 236.600A9.800 9.800 0 1 1 340.700 235.500M333.400 235.500H340.700V242.200" stroke="#3b3b3b" stroke-width="1.300" stroke-linecap="round"/>
<rect x="415.400" y="236" width="16.400" height="9.600" fill="#fafafa" stroke="#5e5e5e" stroke-width="1.300"/><path d="M414.400 235.800h18.400" stroke="#5e5e5e" stroke-width="1.800"/><path d="M421.200 238.400l5 2.500l-5 2.500z" fill="#21a366"/><path d="M423.600 245.600v7M418.200 252.900h10.800" stroke="#5e5e5e" stroke-width="1.400"/>
<path d="M562.800 242.600V236.400H576.600V243.400" fill="none" stroke="#5e5e5e" stroke-width="1.300"/><path d="M562.200 236.900H577.200" stroke="#767676" stroke-width="2.600"/>
<rect x="570.800" y="244.400" width="10.800" height="9.600" fill="#fafafa" stroke="#5e5e5e" stroke-width="1.300"/><path d="M570.200 245.500H582.200" stroke="#767676" stroke-width="2.600"/>
<path d="M565.200 243.400c-2.600 1.600-3.400 5-1 7.200c1.400 1.200 3 1.500 5.800 1.400M567.600 249.200l2.900 2.800l-2.900 2.800" stroke="#2b88d8" stroke-width="1.400" stroke-linecap="round"/>
<path d="M701.70 240.40L704.40 243.20L707.10 240.40" fill="none" stroke="#3b3b3b" stroke-width="1.5" stroke-linecap="round" stroke-linejoin="round"/>
<path d="M730.200 240.600h8.600" stroke="#3b3b3b" stroke-width="1.200"/>
<path d="M730.50 244.00L734.50 248.00L738.50 244.00" fill="none" stroke="#3b3b3b" stroke-width="1.5" stroke-linecap="round" stroke-linejoin="round"/>
</svg>
<!-- leftpanel -->
<div class="a" style="left:290px;top:265px;width:1px;height:846px;background:#cfcfcf"></div>
<span class="t" style="left:15.80px;top:285.00px;font-size:17.4px;color:#444;">1</span>
<span class="t" style="left:15.00px;top:435.00px;font-size:17.4px;color:#c43e1c;">2</span>
<div class="a" style="left:44px;top:288px;width:218.5px;height:124px;background:#fff;border:1px solid #d8d8d8;border-radius:5px;box-shadow:0 1px 2px rgba(0,0,0,.12)"></div>
<div class="a" style="left:41px;top:434px;width:224px;height:130px;background:#fff;border:3px solid #b7472a;border-radius:8px"></div>
<span class="t" style="left:61.80px;top:452.00px;font-size:9.2px;color:#222;letter-spacing:-0.118px;">Presentation Title</span>
<span class="t" style="left:65.40px;top:472.00px;font-size:3.0px;color:#555;letter-spacing:0.047px;">The quick brown fox jumps over the lazy dog. The quick brown</span>
<span class="t" style="left:65.40px;top:475.00px;font-size:3.0px;color:#555;letter-spacing:0.047px;">fox jumps over the lazy dog. The quick brown fox jumps over</span>
<span class="t" style="left:65.40px;top:478.00px;font-size:3.0px;color:#555;letter-spacing:0.037px;">the lazy dog. The quick brown fox jumps over the lazy dog. The</span>
<span class="t" style="left:65.40px;top:481.00px;font-size:3.0px;color:#555;letter-spacing:0.051px;">quick brown fox jumps over the lazy dog.</span>
<div class="a" style="left:62.2px;top:472.20000000000005px;width:0.8px;height:0.8px;background:#777"></div>
<span class="t" style="left:65.40px;top:490.00px;font-size:3.0px;color:#555;letter-spacing:0.047px;">The quick brown fox jumps over the lazy dog. The quick brown</span>
<span class="t" style="left:65.40px;top:493.00px;font-size:3.0px;color:#555;letter-spacing:0.047px;">fox jumps over the lazy dog. The quick brown fox jumps over</span>
<span class="t" style="left:65.40px;top:496.00px;font-size:3.0px;color:#555;letter-spacing:0.037px;">the lazy dog. The quick brown fox jumps over the lazy dog. The</span>
<span class="t" style="left:65.40px;top:500.00px;font-size:3.0px;color:#555;letter-spacing:0.051px;">quick brown fox jumps over the lazy dog.</span>
<div class="a" style="left:62.2px;top:490.80000000000007px;width:0.8px;height:0.8px;background:#777"></div>
<span class="t" style="left:65.40px;top:509.00px;font-size:3.0px;color:#555;letter-spacing:0.047px;">The quick brown fox jumps over the lazy dog. The quick brown</span>
<span class="t" style="left:65.40px;top:512.00px;font-size:3.0px;color:#555;letter-spacing:0.047px;">fox jumps over the lazy dog. The quick brown fox jumps over</span>
<span class="t" style="left:65.40px;top:515.00px;font-size:3.0px;color:#555;letter-spacing:0.037px;">the lazy dog. The quick brown fox jumps over the lazy dog. The</span>
<span class="t" style="left:65.40px;top:518.00px;font-size:3.0px;color:#555;letter-spacing:0.051px;">quick brown fox jumps over the lazy dog.</span>
<div class="a" style="left:62.2px;top:509.40000000000003px;width:0.8px;height:0.8px;background:#777"></div>
<span class="t" style="left:65.40px;top:527.00px;font-size:3.0px;color:#555;letter-spacing:0.047px;">The quick brown fox jumps over the lazy dog. The quick brown</span>
<span class="t" style="left:65.40px;top:530.00px;font-size:3.0px;color:#555;letter-spacing:0.047px;">fox jumps over the lazy dog. The quick brown fox jumps over</span>
<span class="t" style="left:65.40px;top:534.00px;font-size:3.0px;color:#555;letter-spacing:0.037px;">the lazy dog. The quick brown fox jumps over the lazy dog. The</span>
<span class="t" style="left:65.40px;top:537.00px;font-size:3.0px;color:#555;letter-spacing:0.051px;">quick brown fox jumps over the lazy dog.</span>
<div class="a" style="left:62.2px;top:528.0px;width:0.8px;height:0.8px;background:#777"></div>
<span class="t" style="left:155.60px;top:472.00px;font-size:3.0px;color:#555;letter-spacing:0.047px;">The quick brown fox jumps over the lazy dog. The quick brown</span>
<span class="t" style="left:155.60px;top:475.00px;font-size:3.0px;color:#555;letter-spacing:0.047px;">fox jumps over the lazy dog. The quick brown fox jumps over</span>
<span class="t" style="left:155.60px;top:478.00px;font-size:3.0px;color:#555;letter-spacing:0.037px;">the lazy dog. The quick brown fox jumps over the lazy dog. The</span>
<span class="t" style="left:155.60px;top:481.00px;font-size:3.0px;color:#555;letter-spacing:0.051px;">quick brown fox jumps over the lazy dog.</span>
<div class="a" style="left:152.4px;top:472.20000000000005px;width:0.8px;height:0.8px;background:#777"></div>
<span class="t" style="left:155.60px;top:490.00px;font-size:3.0px;color:#555;letter-spacing:0.047px;">The quick brown fox jumps over the lazy dog. The quick brown</span>
<span class="t" style="left:155.60px;top:493.00px;font-size:3.0px;color:#555;letter-spacing:0.047px;">fox jumps over the lazy dog. The quick brown fox jumps over</span>
<span class="t" style="left:155.60px;top:496.00px;font-size:3.0px;color:#555;letter-spacing:0.037px;">the lazy dog. The quick brown fox jumps over the lazy dog. The</span>
<span class="t" style="left:155.60px;top:500.00px;font-size:3.0px;color:#555;letter-spacing:0.051px;">quick brown fox jumps over the lazy dog.</span>
<div class="a" style="left:152.4px;top:490.80000000000007px;width:0.8px;height:0.8px;background:#777"></div>
<span class="t" style="left:155.60px;top:509.00px;font-size:3.0px;color:#555;letter-spacing:0.047px;">The quick brown fox jumps over the lazy dog. The quick brown</span>
<span class="t" style="left:155.60px;top:512.00px;font-size:3.0px;color:#555;letter-spacing:0.047px;">fox jumps over the lazy dog. The quick brown fox jumps over</span>
<span class="t" style="left:155.60px;top:515.00px;font-size:3.0px;color:#555;letter-spacing:0.037px;">the lazy dog. The quick brown fox jumps over the lazy dog. The</span>
<span class="t" style="left:155.60px;top:518.00px;font-size:3.0px;color:#555;letter-spacing:0.051px;">quick brown fox jumps over the lazy dog.</span>
<div class="a" style="left:152.4px;top:509.40000000000003px;width:0.8px;height:0.8px;background:#777"></div>
<!-- rulers -->
<div class="a" style="left:296px;top:267px;width:20px;height:20px;background:#fff;border:1px solid #c6c6c6"></div>
<div class="a" style="left:302.6px;top:273.4px;width:2px;height:7px;background:#555"></div>
<div class="a" style="left:302.6px;top:278.6px;width:7px;height:2px;background:#555"></div>
<div class="a" style="left:419px;top:268px;width:1387px;height:19px;background:#e1e1e1"></div>
<div class="a" style="left:1123px;top:268px;width:566px;height:19px;background:#fff"></div>
<div class="a" style="left:297px;top:311px;width:19px;height:780px;background:#e1e1e1"></div>
<div class="a" style="left:297px;top:530px;width:19px;height:483px;background:#fff"></div>
<svg class="l" width="1920" height="1141" viewBox="0 0 1920 1141" fill="none">
<path d="M420.8 276.6V277.8M433.8 276.6V277.8M446.8 274.2V280.2M459.8 276.6V277.8M472.8 276.6V277.8M485.8 276.6V277.8M511.8 276.6V277.8M524.8 276.6V277.8M537.8 276.6V277.8M550.8 274.2V280.2M563.8 276.6V277.8M576.8 276.6V277.8M589.8 276.6V277.8M615.8 276.6V277.8M628.8 276.6V277.8M641.8 276.6V277.8M654.8 274.2V280.2M667.8 276.6V277.8M680.8 276.6V277.8M693.8 276.6V277.8M719.8 276.6V277.8M732.8 276.6V277.8M745.8 276.6V277.8M758.8 274.2V280.2M771.8 276.6V277.8M784.8 276.6V277.8M797.8 276.6V277.8M823.8 276.6V277.8M836.8 276.6V277.8M849.8 276.6V277.8M862.8 274.2V280.2M875.8 276.6V277.8M888.8 276.6V277.8M901.8 276.6V277.8M927.8 276.6V277.8M940.8 276.6V277.8M953.8 276.6V277.8M966.8 274.2V280.2M979.8 276.6V277.8M992.8 276.6V277.8M1005.8 276.6V277.8M1031.8 276.6V277.8M1044.8 276.6V277.8M1057.8 276.6V277.8M1070.8 274.2V280.2M1083.8 276.6V277.8M1096.8 276.6V277.8M1109.8 276.6V277.8M1135.8 276.6V277.8M1148.8 276.6V277.8M1161.8 276.6V277.8M1174.8 274.2V280.2M1187.8 276.6V277.8M1200.8 276.6V277.8M1213.8 276.6V277.8M1239.8 276.6V277.8M1252.8 276.6V277.8M1265.8 276.6V277.8M1278.8 274.2V280.2M1291.8 276.6V277.8M1304.8 276.6V277.8M1317.8 276.6V277.8M1343.8 276.6V277.8M1356.8 276.6V277.8M1369.8 276.6V277.8M1382.8 274.2V280.2M1395.8 276.6V277.8M1408.8 276.6V277.8M1421.8 276.6V277.8M1447.8 276.6V277.8M1460.8 276.6V277.8M1473.8 276.6V277.8M1486.8 274.2V280.2M1499.8 276.6V277.8M1512.8 276.6V277.8M1525.8 276.6V277.8M1551.8 276.6V277.8M1564.8 276.6V277.8M1577.8 276.6V277.8M1590.8 274.2V280.2M1603.8 276.6V277.8M1616.8 276.6V277.8M1629.8 276.6V277.8M1655.8 276.6V277.8M1668.8 276.6V277.8M1681.8 276.6V277.8M1694.8 274.2V280.2M1707.8 276.6V277.8M1720.8 276.6V277.8M1733.8 276.6V277.8M1759.8 276.6V277.8M1772.8 276.6V277.8M1785.8 276.6V277.8M1798.8 274.2V280.2" stroke="#8a8a8a" stroke-width="1"/>
<path d="M305.8 334.0H307M305.8 347.0H307M305.8 360.0H307M303.4 373.0H309.4M305.8 386.0H307M305.8 399.0H307M305.8 412.0H307M305.8 438.0H307M305.8 451.0H307M305.8 464.0H307M303.4 477.0H309.4M305.8 490.0H307M305.8 503.0H307M305.8 516.0H307M303.4 529.0H309.4M305.8 542.0H307M305.8 555.0H307M305.8 568.0H307M303.4 581.0H309.4M305.8 594.0H307M305.8 607.0H307M305.8 620.0H307M305.8 646.0H307M305.8 659.0H307M305.8 672.0H307M303.4 685.0H309.4M305.8 698.0H307M305.8 711.0H307M305.8 724.0H307M305.8 750.0H307M305.8 763.0H307M305.8 776.0H307M303.4 789.0H309.4M305.8 802.0H307M305.8 815.0H307M305.8 828.0H307M305.8 854.0H307M305.8 867.0H307M305.8 880.0H307M303.4 893.0H309.4M305.8 906.0H307M305.8 919.0H307M305.8 932.0H307M305.8 958.0H307M305.8 971.0H307M305.8 984.0H307M303.4 997.0H309.4M305.8 1010.0H307M305.8 1023.0H307M305.8 1036.0H307M305.8 1062.0H307M305.8 1075.0H307M305.8 1088.0H307" stroke="#8a8a8a" stroke-width="1"/>
<path d="M1227.6 287.2V292.8M1331.6 287.2V292.8M1435.6 287.2V292.8M1539.6 287.2V292.8M1643.6 287.2V292.8" stroke="#6a6a6a" stroke-width="3"/>
<path d="M1117.2 267.4h10.8v3.6l-5.4 5l-5.4-5z" fill="#fff" stroke="#8a8a8a" stroke-width="1"/>
<path d="M1143.2 288v-6.400l5.400-5l5.400 5v6.400zM1143.200 288h10.800v6h-10.800z" fill="#fff" stroke="#8a8a8a" stroke-width="1"/>
</svg>
<span class="t" style="left:1014.50px;top:272.00px;font-size:12.6px;color:#444;">1</span>
<span class="t" style="left:1222.50px;top:272.00px;font-size:12.6px;color:#444;">1</span>
<span class="t" style="left:910.50px;top:272.00px;font-size:12.6px;color:#444;">2</span>
<span class="t" style="left:1326.50px;top:272.00px;font-size:12.6px;color:#444;">2</span>
<span class="t" style="left:806.50px;top:272.00px;font-size:12.6px;color:#444;">3</span>
<span class="t" style="left:1430.50px;top:272.00px;font-size:12.6px;color:#444;">3</span>
<span class="t" style="left:702.50px;top:272.00px;font-size:12.6px;color:#444;">4</span>
<span class="t" style="left:1534.50px;top:272.00px;font-size:12.6px;color:#444;">4</span>
<span class="t" style="left:598.50px;top:272.00px;font-size:12.6px;color:#444;">5</span>
<span class="t" style="left:1638.50px;top:272.00px;font-size:12.6px;color:#444;">5</span>
<span class="t" style="left:494.50px;top:272.00px;font-size:12.6px;color:#444;">6</span>
<span class="t" style="left:1742.50px;top:272.00px;font-size:12.6px;color:#444;">6</span>
<span class="t" style="left:300.5px;top:314.7px;width:12px;height:12.6px;text-align:center;font-size:12.6px;color:#444;transform:rotate(-90deg)">2</span>
<span class="t" style="left:300.5px;top:418.7px;width:12px;height:12.6px;text-align:center;font-size:12.6px;color:#444;transform:rotate(-90deg)">1</span>
<span class="t" style="left:300.5px;top:626.7px;width:12px;height:12.6px;text-align:center;font-size:12.6px;color:#444;transform:rotate(-90deg)">1</span>
<span class="t" style="left:300.5px;top:730.7px;width:12px;height:12.6px;text-align:center;font-size:12.6px;color:#444;transform:rotate(-90deg)">2</span>
<span class="t" style="left:300.5px;top:834.7px;width:12px;height:12.6px;text-align:center;font-size:12.6px;color:#444;transform:rotate(-90deg)">3</span>
<span class="t" style="left:300.5px;top:938.7px;width:12px;height:12.6px;text-align:center;font-size:12.6px;color:#444;transform:rotate(-90deg)">4</span>
<span class="t" style="left:300.5px;top:1042.7px;width:12px;height:12.6px;text-align:center;font-size:12.6px;color:#444;transform:rotate(-90deg)">5</span>
<!-- slide -->
<div class="a" style="left:417px;top:310px;width:1389px;height:782px;background:#fff;border:1px solid #c2c2c2"></div>
<span class="t" style="left:523.60px;top:397.00px;font-size:58px;color:#000;letter-spacing:0.039px;-webkit-text-stroke:1.2px #fff;">Presentation Title</span>
<span class="t" style="left:550.00px;top:522.00px;font-size:19.0px;color:#000;letter-spacing:0.349px;-webkit-text-stroke:0.12px #000;">The quick brown fox jumps over the lazy dog. The quick brown</span>
<span class="t" style="left:550.00px;top:540.00px;font-size:19.0px;color:#000;letter-spacing:0.336px;-webkit-text-stroke:0.12px #000;">fox jumps over the lazy dog. The quick brown fox jumps over</span>
<span class="t" style="left:550.00px;top:558.00px;font-size:19.0px;color:#000;letter-spacing:0.280px;-webkit-text-stroke:0.12px #000;">the lazy dog. The quick brown fox jumps over the lazy dog. The</span>
<span class="t" style="left:550.00px;top:576.00px;font-size:19.0px;color:#000;letter-spacing:0.353px;-webkit-text-stroke:0.12px #000;">quick brown fox jumps over the lazy dog.</span>
<div class="a" style="left:524.6px;top:528.1px;width:5.2px;height:5.2px;background:#000;border-radius:50%"></div>
<span class="t" style="left:550.00px;top:641.00px;font-size:19.0px;color:#000;letter-spacing:0.349px;-webkit-text-stroke:0.12px #000;">The quick brown fox jumps over the lazy dog. The quick brown</span>
<span class="t" style="left:550.00px;top:659.00px;font-size:19.0px;color:#000;letter-spacing:0.336px;-webkit-text-stroke:0.12px #000;">fox jumps over the lazy dog. The quick brown fox jumps over</span>
<span class="t" style="left:550.00px;top:678.00px;font-size:19.0px;color:#000;letter-spacing:0.280px;-webkit-text-stroke:0.12px #000;">the lazy dog. The quick brown fox jumps over the lazy dog. The</span>
<span class="t" style="left:550.00px;top:696.00px;font-size:19.0px;color:#000;letter-spacing:0.353px;-webkit-text-stroke:0.12px #000;">quick brown fox jumps over the lazy dog.</span>
<div class="a" style="left:524.6px;top:647.8000000000001px;width:5.2px;height:5.2px;background:#000;border-radius:50%"></div>
<span class="t" style="left:550.00px;top:761.00px;font-size:19.0px;color:#000;letter-spacing:0.349px;-webkit-text-stroke:0.12px #000;">The quick brown fox jumps over the lazy dog. The quick brown</span>
<span class="t" style="left:550.00px;top:779.00px;font-size:19.0px;color:#000;letter-spacing:0.336px;-webkit-text-stroke:0.12px #000;">fox jumps over the lazy dog. The quick brown fox jumps over</span>
<span class="t" style="left:550.00px;top:797.00px;font-size:19.0px;color:#000;letter-spacing:0.280px;-webkit-text-stroke:0.12px #000;">the lazy dog. The quick brown fox jumps over the lazy dog. The</span>
<span class="t" style="left:550.00px;top:815.00px;font-size:19.0px;color:#000;letter-spacing:0.353px;-webkit-text-stroke:0.12px #000;">quick brown fox jumps over the lazy dog.</span>
<div class="a" style="left:524.6px;top:767.5px;width:5.2px;height:5.2px;background:#000;border-radius:50%"></div>
<span class="t" style="left:550.00px;top:881.00px;font-size:19.0px;color:#000;letter-spacing:0.349px;-webkit-text-stroke:0.12px #000;">The quick brown fox jumps over the lazy dog. The quick brown</span>
<span class="t" style="left:550.00px;top:899.00px;font-size:19.0px;color:#000;letter-spacing:0.336px;-webkit-text-stroke:0.12px #000;">fox jumps over the lazy dog. The quick brown fox jumps over</span>
<span class="t" style="left:550.00px;top:917.00px;font-size:19.0px;color:#000;letter-spacing:0.280px;-webkit-text-stroke:0.12px #000;">the lazy dog. The quick brown fox jumps over the lazy dog. The</span>
<span class="t" style="left:550.00px;top:935.00px;font-size:19.0px;color:#000;letter-spacing:0.353px;-webkit-text-stroke:0.12px #000;">quick brown fox jumps over the lazy dog.</span>
<div class="a" style="left:524.6px;top:887.2px;width:5.2px;height:5.2px;background:#000;border-radius:50%"></div>
<span class="t" style="left:1138.20px;top:522.00px;font-size:19.0px;color:#000;letter-spacing:0.349px;-webkit-text-stroke:0.12px #000;">The quick brown fox jumps over the lazy dog. The quick brown</span>
<span class="t" style="left:1138.20px;top:540.00px;font-size:19.0px;color:#000;letter-spacing:0.336px;-webkit-text-stroke:0.12px #000;">fox jumps over the lazy dog. The quick brown fox jumps over</span>
<span class="t" style="left:1138.20px;top:558.00px;font-size:19.0px;color:#000;letter-spacing:0.280px;-webkit-text-stroke:0.12px #000;">the lazy dog. The quick brown fox jumps over the lazy dog. The</span>
<span class="t" style="left:1138.20px;top:576.00px;font-size:19.0px;color:#000;letter-spacing:0.353px;-webkit-text-stroke:0.12px #000;">quick brown fox jumps over the lazy dog.</span>
<div class="a" style="left:1112.8px;top:528.1px;width:5.2px;height:5.2px;background:#000;border-radius:50%"></div>
<span class="t" style="left:1138.20px;top:641.00px;font-size:19.0px;color:#000;letter-spacing:0.349px;-webkit-text-stroke:0.12px #000;">The quick brown fox jumps over the lazy dog. The quick brown</span>
<span class="t" style="left:1138.20px;top:659.00px;font-size:19.0px;color:#000;letter-spacing:0.336px;-webkit-text-stroke:0.12px #000;">fox jumps over the lazy dog. The quick brown fox jumps over</span>
<span class="t" style="left:1138.20px;top:678.00px;font-size:19.0px;color:#000;letter-spacing:0.280px;-webkit-text-stroke:0.12px #000;">the lazy dog. The quick brown fox jumps over the lazy dog. The</span>
<span class="t" style="left:1138.20px;top:696.00px;font-size:19.0px;color:#000;letter-spacing:0.353px;-webkit-text-stroke:0.12px #000;">quick brown fox jumps over the lazy dog.</span>
<div class="a" style="left:1112.8px;top:647.8000000000001px;width:5.2px;height:5.2px;background:#000;border-radius:50%"></div>
<span class="t" style="left:1138.20px;top:761.00px;font-size:19.0px;color:#000;letter-spacing:0.349px;-webkit-text-stroke:0.12px #000;">The quick brown fox jumps over the lazy dog. The quick brown</span>
<span class="t" style="left:1138.20px;top:779.00px;font-size:19.0px;color:#000;letter-spacing:0.336px;-webkit-text-stroke:0.12px #000;">fox jumps over the lazy dog. The quick brown fox jumps over</span>
<span class="t" style="left:1138.20px;top:797.00px;font-size:19.0px;color:#000;letter-spacing:0.280px;-webkit-text-stroke:0.12px #000;">the lazy dog. The quick brown fox jumps over the lazy dog. The</span>
<span class="t" style="left:1138.20px;top:815.00px;font-size:19.0px;color:#000;letter-spacing:0.353px;-webkit-text-stroke:0.12px #000;">quick brown fox jumps over the lazy dog.</span>
<div class="a" style="left:1112.8px;top:767.5px;width:5.2px;height:5.2px;background:#000;border-radius:50%"></div>
<svg class="l" width="1920" height="1141" viewBox="0 0 1920 1141" fill="none">
<rect x="512.5" y="518.5" width="1197" height="496" stroke="#3a3a3a" stroke-width="1" stroke-dasharray="1.5 1.5"/>
<path d="M1112 489V512" stroke="#595959" stroke-width="1.2"/>
<circle cx="512.6" cy="518.7" r="5.9" fill="#fff" stroke="#595959" stroke-width="2.300"/>
<circle cx="512.6" cy="766.8" r="5.9" fill="#fff" stroke="#595959" stroke-width="2.300"/>
<circle cx="512.6" cy="1014.8" r="5.9" fill="#fff" stroke="#595959" stroke-width="2.300"/>
<circle cx="1112" cy="518.7" r="5.9" fill="#fff" stroke="#595959" stroke-width="2.300"/>
<circle cx="1112" cy="1014.8" r="5.9" fill="#fff" stroke="#595959" stroke-width="2.300"/>
<circle cx="1709.5" cy="518.7" r="5.9" fill="#fff" stroke="#595959" stroke-width="2.300"/>
<circle cx="1709.5" cy="766.8" r="5.9" fill="#fff" stroke="#595959" stroke-width="2.300"/>
<circle cx="1709.5" cy="1014.8" r="5.9" fill="#fff" stroke="#595959" stroke-width="2.300"/>
<g transform="translate(1111.4 476.4)" stroke="#595959" stroke-width="1.9" stroke-linejoin="miter" fill="#fff"><path d="M12 -1.800A12 12 0 1 0 7.200 9.800L4 5.600A7.300 7.300 0 1 1 7.300 -1.400L1.200 -1.400L9.600 7L18 -1.800Z"/></g>
<rect x="471.500" y="995.500" width="24" height="24" fill="#fafafa" stroke="#ababab" stroke-width="1"/>
<path d="M475 1007.500H492" stroke="#767676" stroke-width="1"/><path d="M475 1009.300H492" stroke="#bdbdbd" stroke-width="0.800"/>
<path d="M483.500 998.500V1005M481.200 1002.600l2.300 2.400l2.300-2.400M483.500 1017V1010.500M481.200 1012.900l2.300-2.400l2.300 2.400" stroke="#2b6fe8" stroke-width="1.300" stroke-linecap="round"/>
</svg>
<!-- scrollbar -->
<div class="a" style="left:1899px;top:265px;width:21px;height:778px;background:#f3f3f3;border-radius:6px 0 0 10px"></div>
<div class="a" style="left:1904.3px;top:654px;width:10.8px;height:369px;background:#767676;border-radius:5.4px"></div>
<div class="a" style="left:1917.6px;top:862px;width:2.4px;height:17px;background:#111"></div>
<svg class="l" width="1920" height="1141" viewBox="0 0 1920 1141" fill="#6a6a6a">
<path d="M1905 277.600l4.600-6l4.600 6z" stroke="#6a6a6a" stroke-width="1.600" stroke-linejoin="round"/>
<path d="M1905.600 1030.600l4 4.600l4-4.600z" stroke="#6a6a6a" stroke-width="1.400" stroke-linejoin="round"/>
<path d="M1904.400 1052.800l5.200-5.600l5.200 5.600zM1904.400 1059.600l5.200-5.600l5.200 5.600z" stroke="#6a6a6a" stroke-width="1.400" stroke-linejoin="round"/>
<path d="M1904.400 1068.200l5.200 5.600l5.200-5.600zM1904.400 1075l5.200 5.600l5.200-5.600z" stroke="#6a6a6a" stroke-width="1.400" stroke-linejoin="round"/>
</svg>
<!-- statusbar -->
<div class="a" style="left:291px;top:1110px;width:1629px;height:1px;background:#d6d6d6"></div>
<div class="a" style="left:0px;top:1114px;width:1920px;height:27px;background:#f3f3f3"></div>
<div class="a" style="left:0px;top:1139px;width:1920px;height:1px;background:#b4b8be"></div>
<div class="a" style="left:0px;top:1140px;width:1920px;height:1px;background:#1e2b3c"></div>
<div class="a" style="left:1475.5px;top:1114px;width:49.5px;height:24.6px;background:#dedede"></div>
<span class="t" style="left:10.00px;top:1121.00px;font-size:13.3px;color:#333;letter-spacing:-0.139px;">Slide 2 of 2</span>
<span class="t" style="left:140.00px;top:1121.00px;font-size:13.3px;color:#333;letter-spacing:-0.295px;">English (United States)</span>
<span class="t" style="left:312.50px;top:1121.00px;font-size:13.3px;color:#333;letter-spacing:-0.293px;">Accessibility: Investigate</span>
<span class="t" style="left:1282.50px;top:1121.00px;font-size:13.3px;color:#333;letter-spacing:-0.188px;">Notes</span>
<span class="t" style="left:1359.40px;top:1121.00px;font-size:13.3px;color:#333;letter-spacing:-0.270px;">Display Settings</span>
<span class="t" style="left:1854.50px;top:1121.00px;font-size:13px;color:#333;letter-spacing:-0.500px;transform:scaleX(0.9468);transform-origin:0 0;">87%</span>
<svg class="l" width="1920" height="1141" viewBox="0 0 1920 1141" fill="none" stroke="#3b3b3b" stroke-width="1.2" stroke-linejoin="round" stroke-linecap="round">
<path d="M108.400 1120.800C106.500 1119.800 103.500 1119.800 100.800 1120.200V1134H106.600M108.400 1120.800C110.300 1119.800 113.300 1119.800 116.400 1120.200V1126.600M108.400 1120.800V1129.600M107.400 1131.600L110.900 1135L116.900 1129" stroke-width="1.400"/>
<path d="M290.900 1122.300L295.400 1124.900H300.400L304.500 1121.900M297.900 1124.900V1128.800L293.600 1134.700M297.900 1128.800L299.300 1130.800" stroke="#333" stroke-width="3.500"/><path d="M290.900 1122.300L295.400 1124.900H300.400L304.500 1121.900M297.900 1124.900V1128.800L293.600 1134.700M297.900 1128.800L299.300 1130.800" stroke="#f3f3f3" stroke-width="1.300"/>
<circle cx="297.800" cy="1120" r="2.100" fill="#f3f3f3" stroke-width="1.200"/>
<path d="M300.400 1128.800L307.600 1135.600M307.200 1128.400L299.400 1135.600" stroke-width="1.300"/>
<path d="M1260 1125.600h19.400M1260 1130h19.400M1260 1134.400h19.400M1266.200 1121.400l3.600-3.200l3.600 3.200"/>
<path d="M1347 1131.400h-8.400v-10.800h16.400v5"/><path d="M1342.600 1134.600h3"/><circle cx="1351.800" cy="1131" r="2.600"/><path d="M1351.800 1126.400v1.600M1351.800 1134v1.600M1347.200 1131h1.600M1354.800 1131h1.600M1348.600 1127.800l1.100 1.100M1354 1133.200l1.100 1.100M1355 1127.800l-1.100 1.100M1349.600 1133.200l-1.100 1.100" stroke-width="1.100"/>
<rect x="1492" y="1119.600" width="16.600" height="14.400" rx="0.600"/><path d="M1495 1119.600v14.400"/><rect x="1497.800" y="1122.400" width="8" height="5.200"/><path d="M1497.600 1130.600h8.400"/>
<rect x="1540.8" y="1120" width="7.200" height="6" />
<rect x="1540.8" y="1129.2" width="7.200" height="6" />
<rect x="1551.2" y="1120" width="7.200" height="6" />
<rect x="1551.2" y="1129.2" width="7.200" height="6" />
<path d="M1599.200 1121.400c-2.400-1.600-5-2-8-1.600v12.800c3-.4 5.600 0 8 1.600c2.400-1.600 5-2 8-1.600v-12.800c-3-.4-5.600 0-8 1.600zM1599.200 1121.400v12.800"/><path d="M1593.400 1123.400h3.400M1593.400 1126h3.400M1593.400 1128.600h3.400M1601.600 1123.400h3.400M1601.600 1126h3.400M1601.600 1128.600h3.400" stroke-width="0.900"/>
<path d="M1641.400 1119.800h16.400M1643 1119.800v8.400h13.200v-8.400M1649.600 1128.200v5.400M1645.600 1134h8"/><rect x="1646.600" y="1122" width="6" height="3.600" fill="#3b3b3b" stroke="none"/>
<path d="M1683 1127.200h8.400M1829 1127.200h9.400M1833.700 1122.600v9.200"/><path d="M1698 1127.200h124.600" stroke="#5e5e5e" stroke-width="1"/><path d="M1760.600 1124.400v5.600" stroke="#5e5e5e" stroke-width="1"/>
<rect x="1749" y="1119.600" width="5.400" height="15" fill="#5e5e5e" stroke="none"/>
<rect x="1900.200" y="1122.200" width="8.400" height="9.600" rx="1.200"/><path d="M1902 1119.400l2.400-2.400l2.400 2.400M1902 1134.800l2.400 2.400l2.400-2.400M1897.600 1124.600l-2.400 2.400l2.400 2.400M1911.200 1124.600l2.400 2.400l-2.400 2.400"/>
</svg>
<!-- menu -->
<div class="a" style="left:845.4px;top:182px;width:185.4px;height:222.8px;background:#fff;border:1px solid #c2c2c2;border-radius:6px;box-shadow:0 4px 10px rgba(0,0,0,.16),0 0 2px rgba(0,0,0,.08)"></div>
<div class="a" style="left:847.2px;top:243.8px;width:182px;height:60px;background:#ebebeb"></div>
<div class="a" style="left:858.8px;top:249px;width:50.2px;height:50px;background:#fff"></div>
<div class="a" style="left:847.2px;top:365px;width:182px;height:1px;background:#dcdcdc"></div>
<svg class="l" width="1920" height="1141" viewBox="0 0 1920 1141" fill="none">
<rect x="870.600" y="196.8" width="27.200" height="34.400" fill="#fafafa" stroke="#595959" stroke-width="1.400"/>
<path d="M875.200 205.9H892.800" stroke="#2b88d8" stroke-width="1.400"/><path d="M875.200 211H892.800" stroke="#2b88d8" stroke-width="1.400"/><path d="M875.200 216H892.800" stroke="#2b88d8" stroke-width="1.400"/><path d="M875.200 221H892.800" stroke="#2b88d8" stroke-width="1.400"/>
<rect x="870.600" y="256.7" width="27.200" height="34.400" fill="#fafafa" stroke="#595959" stroke-width="1.400"/>
<path d="M875.200 265.8H882.800M885.200 265.8H892.800" stroke="#2b88d8" stroke-width="1.400"/><path d="M875.200 270.9H882.800M885.200 270.9H892.800" stroke="#2b88d8" stroke-width="1.400"/><path d="M875.200 275.9H882.800M885.200 275.9H892.800" stroke="#2b88d8" stroke-width="1.400"/><path d="M875.200 280.9H882.800M885.200 280.9H892.800" stroke="#2b88d8" stroke-width="1.400"/>
<rect x="870.600" y="316.6" width="27.200" height="34.400" fill="#fafafa" stroke="#595959" stroke-width="1.400"/>
<path d="M875.200 325.7H879.800M881.700 325.7H886.300M888.200 325.7H892.800" stroke="#2b88d8" stroke-width="1.400"/><path d="M875.200 330.8H879.800M881.700 330.8H886.300M888.200 330.8H892.800" stroke="#2b88d8" stroke-width="1.400"/><path d="M875.200 335.8H879.800M881.700 335.8H886.300M888.200 335.8H892.800" stroke="#2b88d8" stroke-width="1.400"/><path d="M875.200 340.8H879.800M881.700 340.8H886.300M888.200 340.8H892.800" stroke="#2b88d8" stroke-width="1.400"/>
<path d="M863.200 378.8H870M872.600 378.8H879.400" stroke="#2b88d8" stroke-width="1.300"/><path d="M863.200 382.5H870M872.600 382.5H879.400" stroke="#2b88d8" stroke-width="1.300"/><path d="M863.200 386.2H870M872.600 386.2H879.400" stroke="#2b88d8" stroke-width="1.300"/>
</svg>
<span class="t" style="left:921.00px;top:207.00px;font-size:15.8px;letter-spacing:-0.800px;"><u>O</u>ne Column</span>
<span class="t" style="left:921.00px;top:267.00px;font-size:15.8px;letter-spacing:-0.690px;"><u>T</u>wo Columns</span>
<span class="t" style="left:921.00px;top:327.00px;font-size:15.8px;letter-spacing:-0.835px;">T<u>h</u>ree Columns</span>
<span class="t" style="left:892.30px;top:377.00px;font-size:15.8px;letter-spacing:-0.814px;"><u>M</u>ore Columns...</span>
</body>
</html>
